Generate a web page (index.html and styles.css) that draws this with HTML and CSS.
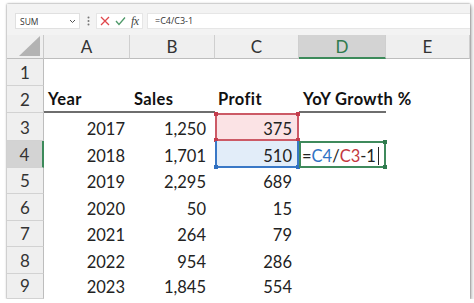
FILE: index.html
```html
<!DOCTYPE html>
<html lang="en">
<head>
    <meta charset="UTF-8">
    <meta name="viewport" content="width=device-width, initial-scale=1.0">
    <title>YoY Growth</title>
    <link rel="stylesheet" href="styles.css">
</head>
<body>
<div class="sheet">
    <div class="formula-bar">
        <div class="name-box">
            <span>SUM</span>
            <svg width="7" height="5" viewBox="0 0 7 5"><polyline points="1,1 3.5,3.5 6,1" fill="none" stroke="#555" stroke-width="1"/></svg>
        </div>
        <div class="grip">
            <svg width="3" height="10" viewBox="0 0 3 10"><circle cx="1.5" cy="1.5" r="1" fill="#777"/><circle cx="1.5" cy="5" r="1" fill="#777"/><circle cx="1.5" cy="8.5" r="1" fill="#777"/></svg>
        </div>
        <div class="fx-box">
            <svg width="10" height="10" viewBox="0 0 10 10"><path d="M1,1 L9,9 M9,1 L1,9" stroke="#e0474c" stroke-width="1.3"/></svg>
            <svg width="11" height="10" viewBox="0 0 11 10"><polyline points="1,5 4,8.5 10,1.5" fill="none" stroke="#4f9a6a" stroke-width="1.3"/></svg>
            <span class="fx">fx</span>
        </div>
        <div class="formula-input">=C4/C3-1</div>
    </div>

    <div class="grid">
        <!-- column headers -->
        <div class="corner"><svg width="22" height="20" viewBox="0 0 22 20"><polygon points="21,0 21,20 0,20" fill="#b3b3b3"/></svg></div>
        <div class="col-head">A</div>
        <div class="col-head">B</div>
        <div class="col-head">C</div>
        <div class="col-head active">D</div>
        <div class="col-head">E</div>

        <!-- row 1 -->
        <div class="row-head">1</div>
        <div class="cell"></div><div class="cell"></div><div class="cell"></div><div class="cell"></div><div class="cell"></div>

        <!-- row 2 -->
        <div class="row-head">2</div>
        <div class="cell title">Year</div>
        <div class="cell title">Sales</div>
        <div class="cell title plain">Profit</div>
        <div class="cell title">YoY Growth %</div>
        <div class="cell"></div>

        <!-- row 3 -->
        <div class="row-head">3</div>
        <div class="cell num col-a">2017</div>
        <div class="cell num col-b">1,250</div>
        <div class="cell num col-c ref-red">375
            <span class="handle tl red"></span><span class="handle tr red"></span><span class="handle bl red"></span><span class="handle br red"></span>
        </div>
        <div class="cell"></div>
        <div class="cell"></div>

        <!-- row 4 -->
        <div class="row-head active">4</div>
        <div class="cell num col-a">2018</div>
        <div class="cell num col-b">1,701</div>
        <div class="cell num col-c ref-blue">510
            <span class="handle bl blue"></span><span class="handle br blue"></span>
        </div>
        <div class="cell editing">=<span class="c-blue">C4</span>/<span class="c-red">C3</span>-1<span class="caret"></span>
            <span class="handle tr green"></span><span class="handle br green"></span>
        </div>
        <div class="cell"></div>

        <!-- row 5 -->
        <div class="row-head">5</div>
        <div class="cell num col-a">2019</div>
        <div class="cell num col-b">2,295</div>
        <div class="cell num col-c">689</div>
        <div class="cell"></div><div class="cell"></div>

        <!-- row 6 -->
        <div class="row-head">6</div>
        <div class="cell num col-a">2020</div>
        <div class="cell num col-b">50</div>
        <div class="cell num col-c">15</div>
        <div class="cell"></div><div class="cell"></div>

        <!-- row 7 -->
        <div class="row-head">7</div>
        <div class="cell num col-a">2021</div>
        <div class="cell num col-b">264</div>
        <div class="cell num col-c">79</div>
        <div class="cell"></div><div class="cell"></div>

        <!-- row 8 -->
        <div class="row-head">8</div>
        <div class="cell num col-a">2022</div>
        <div class="cell num col-b">954</div>
        <div class="cell num col-c">286</div>
        <div class="cell"></div><div class="cell"></div>

        <!-- row 9 -->
        <div class="row-head">9</div>
        <div class="cell num col-a">2023</div>
        <div class="cell num col-b">1,845</div>
        <div class="cell num col-c">554</div>
        <div class="cell"></div><div class="cell"></div>
    </div>
</div>
</body>
</html>
```

FILE: styles.css
```css
body {
    margin: 0;
    padding: 4px 0 0 7px;
    background: #fff;
    color: #222;
    font-family: Lato, "Open Sans", sans-serif;
}

.sheet {
    width: 463px;
    height: 295px;
    overflow: hidden;
    background: #fff;
    box-shadow: 0 0 2px rgba(0, 0, 0, 0.5), 2px 2px 4px rgba(0, 0, 0, 0.25);
}

/* formula bar */
.formula-bar {
    height: 31px;
    box-sizing: border-box;
    background: #f3f3f3;
    display: flex;
    align-items: flex-start;
    padding: 9px 0 0 8px;
}

.name-box {
    width: 65px;
    height: 16px;
    box-sizing: border-box;
    background: #fff;
    border: 1px solid #e0e0e0;
    display: flex;
    align-items: center;
    justify-content: space-between;
    padding: 0 3px 0 4px;
    font-family: "Open Sans", sans-serif;
    font-size: 8.5px;
    color: #333;
}

.grip {
    width: 16px;
    height: 16px;
    display: flex;
    align-items: center;
    justify-content: center;
}

.fx-box {
    width: 47px;
    height: 16px;
    box-sizing: border-box;
    background: #fff;
    border: 1px solid #e6e6e6;
    display: flex;
    align-items: center;
    gap: 5px;
    padding-left: 3px;
}

.fx {
    font-family: "Liberation Serif", serif;
    font-style: italic;
    font-size: 12px;
    color: #444;
    letter-spacing: -0.5px;
}

.formula-input {
    flex: 1;
    height: 16px;
    margin-left: 4px;
    box-sizing: border-box;
    background: #fff;
    border: 1px solid #e6e6e6;
    border-right: none;
    padding-left: 7px;
    font-family: "Open Sans", sans-serif;
    font-size: 9px;
    line-height: 14px;
    color: #333;
}

/* grid */
.grid {
    display: grid;
    grid-template-columns: 37px 86px 85px 84px 87px 84px;
    grid-template-rows: 24px 27px 27px 28px 27px 26px 27px 26px 27px 25px;
}

.grid > div {
    box-sizing: border-box;
    display: flex;
    align-items: flex-end;
    line-height: 20px;
    white-space: nowrap;
    position: relative;
}

.corner {
    background: #efefef;
    border-right: 1px solid #c9c9c9;
    border-bottom: 1px solid #bdbdbd;
    justify-content: flex-end;
    padding: 0 2px 2px 0;
}

.col-head {
    background: #efefef;
    border-right: 1px solid #cfcfcf;
    border-bottom: 1px solid #bdbdbd;
    justify-content: center;
    font-size: 17px;
    color: #333;
    padding-bottom: 1px;
}

.col-head.active {
    background: #d3d3d3;
    color: #2f7a4e;
    border-bottom: 2px solid #3c8a5a;
    padding-bottom: 0;
}

.row-head {
    background: #efefef;
    border-right: 1px solid #bdbdbd;
    border-bottom: 1px solid #d2d2d2;
    justify-content: center;
    font-size: 17px;
    color: #333;
    padding-bottom: 2px;
}

.row-head.active {
    background: #d3d3d3;
    border-right: 2px solid #3c8a5a;
}

.cell {
    font-size: 16.5px;
    padding-bottom: 2px;
}

.title {
    font-weight: bold;
    padding-left: 4px;
    border-bottom: 2px solid #6e6e6e;
    color: #111;
    letter-spacing: 0.4px;
}

.title.plain {
    border-bottom: none;
    padding-left: 3px;
    padding-bottom: 4px;
}

.num {
    justify-content: flex-end;
}

.col-a { padding-right: 5px; }
.col-b { padding-right: 9px; }
.col-c { padding-right: 7px; }

.ref-red {
    background: #fbe3e5;
    box-shadow: inset 0 0 0 2px #cc5a66;
}

.ref-blue {
    background: #e2edf9;
    box-shadow: inset 0 -2px 0 #3a78c6, inset 2px 0 0 #3a78c6, inset -2px 0 0 #3a78c6;
}

.editing {
    padding-left: 3px;
    box-shadow: inset 0 0 0 2px #3f8a5c;
}

.c-blue { color: #2f72c4; }
.c-red { color: #c4373e; }

.caret {
    display: inline-block;
    width: 1px;
    height: 18px;
    background: #222;
    margin-left: 2px;
    margin-bottom: 1px;
}

/* range corner handles */
.handle {
    position: absolute;
    width: 4px;
    height: 4px;
}

.handle.tl { top: -1px; left: -1px; }
.handle.tr { top: -1px; right: -1px; }
.handle.bl { bottom: -1px; left: -1px; }
.handle.br { bottom: -1px; right: -1px; }

.handle.red { background: #c43c4c; }
.handle.blue { background: #2f6fc0; }
.handle.green { background: #2f7a4e; }
```
